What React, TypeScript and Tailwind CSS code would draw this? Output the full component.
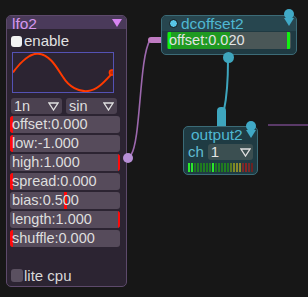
import type { ReactNode } from "react";

// Small node-graph canvas: an lfo feeding a dcoffset, which feeds an output.
const font = { fontFamily: '"Liberation Sans", Arial, sans-serif' };

type SliderProps = { label: string; pos: number };

function LfoSlider({ label, pos }: SliderProps) {
	return (
		<div className="relative h-[17px] rounded-[3px] bg-[#564b5b] overflow-hidden">
			<div
				className="absolute top-0 h-full w-[3px] bg-[#ff0a0a]"
				style={{ left: `${pos * 108}px` }}
			/>
			<span className="absolute left-[2px] top-[0px] text-[14.5px] leading-[17px] text-[#dedede]">
				{label}
			</span>
		</div>
	);
}

function DownTri({ color = "#e0e0e0" }: { color?: string }) {
	return (
		<svg width="11" height="9" viewBox="0 0 11 9">
			<path d="M1 1 H10 L5.5 8 Z" fill="none" stroke={color} strokeWidth="1.3" />
		</svg>
	);
}

function Select({ children, className }: { children: ReactNode; className: string }) {
	return (
		<div
			className={`flex items-center justify-between rounded-[3px] px-[3px] h-[16px] text-[14.5px] leading-[16px] text-[#dedede] ${className}`}
		>
			<span>{children}</span>
			<DownTri />
		</div>
	);
}

const vu = [
	"#2ce82c", "#2ce82c", "#1f7a1f", "#217f21", "#1f7a1f", "#217f21", "#1f7a1f",
	"#217f21", "#2ce82c", "#1f7a1f", "#217f21", "#1f7a1f", "#217f21", "#1f7a1f",
	"#5b7a22", "#7d8a26", "#8a8a2a", "#8c8a2a", "#7a2a2a", "#8a2424", "#7a2a2a",
	"#6a2222",
];

export default function App() {
	return (
		<div
			className="relative w-[308px] h-[297px] overflow-hidden bg-[#171717]"
			style={font}
		>
			{/* cables */}
			<svg className="absolute inset-0" width="308" height="297">
				<path
					d="M131 155 C141 140 139 58 150 40"
					fill="none"
					stroke="#9c68ad"
					strokeWidth="1.6"
				/>
				<path
					d="M228 60 C228 86 227 96 224 110"
					fill="none"
					stroke="#3ea6be"
					strokeWidth="2"
				/>
				<line x1="268" y1="125" x2="308" y2="125" stroke="#5a3a68" strokeWidth="2" />
			</svg>

			{/* lfo2 */}
			<div className="absolute left-[6px] top-[15px] w-[121px] h-[272px] rounded-[5px] border border-[#5d4a6b] bg-[#2c2432] overflow-hidden">
				<div className="flex h-[13px] items-center justify-between bg-[#4a3a5a] pl-[5px] pr-[4px]">
					<span className="text-[15.5px] leading-[13px] pt-[2px] text-[#d597ee]">lfo2</span>
					<svg width="10" height="8" viewBox="0 0 10 8">
						<path d="M0 0 H10 L5 8 Z" fill="#d784f2" />
					</svg>
				</div>
				<div className="flex flex-col px-[2px]">
					<div className="flex items-center gap-[2px] pl-[2px] mt-[6px] h-[12px]">
						<div className="w-[11px] h-[11px] rounded-[3px] bg-[#f2f2f2]" />
						<span className="text-[15px] leading-[12px] text-[#e2e2e2]">enable</span>
					</div>
					<div className="ml-[3px] mt-[5px] w-[102px] h-[41px] border border-[#5452b4]">
						<svg width="100" height="39" viewBox="0 0 100 39">
							<path
								d="M0 19.5 C8 8 18 0 25 0.8 C38 1 46 19 50 24 C56 34 66 39 75 38 C85 37 92 28 100 19.5"
								fill="none"
								stroke="#ff3a00"
								strokeWidth="2"
							/>
							<circle cx="99" cy="19.5" r="2.6" fill="#c82a00" stroke="#ff3a00" strokeWidth="1.5" />
						</svg>
					</div>
					<div className="flex gap-[4px] mt-[5px] pl-[2px] pr-[4px]">
						<Select className="w-[51px] bg-[#4b4150]">1n</Select>
						<Select className="w-[51px] bg-[#4b4150]">sin</Select>
					</div>
					<div className="flex flex-col gap-[2px] mt-[2px] pl-[1px] pr-[4px]">
						<LfoSlider label="offset:0.000" pos={0} />
						<LfoSlider label="low:-1.000" pos={0} />
						<LfoSlider label="high:1.000" pos={1} />
						<LfoSlider label="spread:0.000" pos={0} />
						<LfoSlider label="bias:0.500" pos={0.5} />
						<LfoSlider label="length:1.000" pos={1} />
						<LfoSlider label="shuffle:0.000" pos={0} />
					</div>
					<div className="flex items-center gap-[1px] pl-[2px] mt-[22px] h-[13px]">
						<div className="w-[12px] h-[13px] rounded-[3px] bg-[#5a5060]" />
						<span className="text-[15px] leading-[13px] text-[#d8d8d8]">lite cpu</span>
					</div>
				</div>
			</div>
			<div className="absolute left-[123px] top-[153px] w-[10px] h-[10px] rounded-full bg-[#b78fd6]" />

			{/* dcoffset2 */}
			<div className="absolute left-[148px] top-[37px] w-[22px] h-[6px] rounded-[3px] bg-[#c07cc2]" />
			<div className="absolute left-[161px] top-[15px] w-[136px] h-[40px] rounded-[5px] border border-[#3c6b77] bg-[#1f3a42] overflow-hidden">
				<div className="flex h-[15px] items-center gap-[3px] bg-[#27464f] pl-[7px]">
					<div className="w-[9px] h-[9px] rounded-full bg-[#58c6e6] border-[1.5px] border-[#101010]" />
					<span className="text-[15.5px] leading-[15px] text-[#4fb8d2]">dcoffset2</span>
				</div>
				<div className="relative ml-[5px] mt-[1px] w-[124px] h-[17px] rounded-[2px] bg-[#4a5757] overflow-hidden">
					<div className="absolute left-0 top-0 h-full w-[63px] bg-[#1f9a22]" />
					<div className="absolute left-[1px] top-0 h-full w-[3px] bg-[#12f012]" />
					<div className="absolute left-[120px] top-0 h-full w-[3px] bg-[#12f012]" />
					<span className="absolute left-[2px] top-0 text-[14.5px] leading-[17px] text-[#e4e4e4]">
						offset:0.020
					</span>
				</div>
			</div>
			<div className="absolute left-[284px] top-[9px] w-[10px] h-[10px] rounded-full bg-[#40a9c6]" />
			<svg className="absolute left-[284px] top-[18px]" width="10" height="8" viewBox="0 0 10 8">
				<path d="M0 0 H10 L5 8 Z" fill="#40a9c6" />
			</svg>
			<div className="absolute left-[223px] top-[52px] w-[11px] h-[11px] rounded-full bg-[#3ea6be]" />

			{/* output2 */}
			<div className="absolute left-[217px] top-[107px] w-[9px] h-[24px] rounded-[4px] bg-[#3ea6be]" />
			<div className="absolute left-[183px] top-[126px] w-[75px] h-[49px] rounded-[5px] border border-[#3b6b77] bg-[#1f3b43] px-[4px]">
				<div className="h-[15px] pl-[3px] text-[15.5px] leading-[16px] text-[#4fb8d2]">output2</div>
				<div className="flex items-center gap-[4px] mt-[2px] h-[16px]">
					<span className="text-[15px] leading-[16px] text-[#62bcd2]">ch</span>
					<div className="flex flex-1 items-center justify-between h-[16px] rounded-[3px] bg-[#3b4f51] pl-[3px] pr-[2px]">
						<span className="text-[15px] leading-[16px] text-[#e4e4e4]">1</span>
						<DownTri />
					</div>
				</div>
				<div className="flex gap-[1px] mt-[3px] h-[9px]">
					{vu.map((c, i) => (
						<div key={i} className="w-[2px] h-full" style={{ backgroundColor: c }} />
					))}
				</div>
			</div>
			<div className="absolute left-[246px] top-[121px] w-[10px] h-[10px] rounded-full bg-[#40a9c6]" />
			<svg className="absolute left-[246px] top-[130px]" width="10" height="8" viewBox="0 0 10 8">
				<path d="M0 0 H10 L5 8 Z" fill="#40a9c6" />
			</svg>
		</div>
	);
}
